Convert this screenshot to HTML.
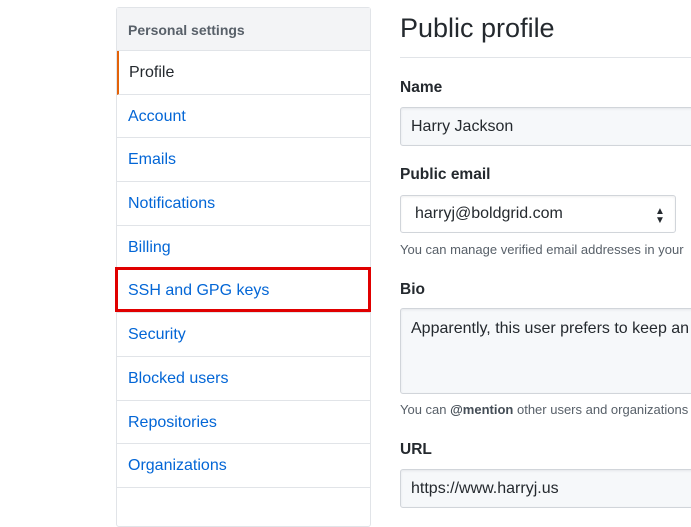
<!DOCTYPE html>
<html><head><meta charset="utf-8"><style>
*{box-sizing:border-box;margin:0;padding:0}
body{width:691px;height:500px;overflow:hidden;background:#fff;font-family:"Liberation Sans",sans-serif;position:relative}
.side{position:absolute;left:116px;top:7px;width:255px;height:520px;border:1px solid #e1e4e8;border-radius:3px;}
.hd{height:43px;background:#f3f4f6;border-bottom:1px solid #e1e4e8;padding:14px 11px;font-size:14px;font-weight:bold;color:#586069}
.it{height:43.7px;border-bottom:1px solid #e1e4e8;padding:0 11px;line-height:43px;font-size:16px;color:#0366d6}
.it.sel{color:#24292e;border-left:2px solid #e36209;padding-left:10px}
.red{position:absolute;left:115px;top:267px;width:256px;height:45px;border:3px solid #e00000}
.t{position:absolute;left:400px;font-size:27px;color:#24292e;top:13px}
.line{position:absolute;left:400px;right:0;top:57px;border-top:1px solid #e1e4e8}
.lb{position:absolute;left:400px;font-size:15.5px;font-weight:bold;color:#24292e}
.in{position:absolute;left:400px;border:1px solid #d1d5da;border-radius:3px;background:#f6f8fa;font-size:16px;color:#24292e;padding-left:10px;box-shadow:inset 0 1px 2px rgba(27,31,35,.075);white-space:nowrap;overflow:hidden}
.note{position:absolute;left:400px;font-size:13px;color:#586069;white-space:nowrap}
</style></head><body>
<div class="side">
<div class="hd">Personal settings</div>
<div class="it sel">Profile</div>
<div class="it">Account</div>
<div class="it">Emails</div>
<div class="it">Notifications</div>
<div class="it">Billing</div>
<div class="it">SSH and GPG keys</div>
<div class="it">Security</div>
<div class="it">Blocked users</div>
<div class="it">Repositories</div>
<div class="it">Organizations</div>
</div>
<div class="red"></div>
<div class="t">Public profile</div>
<div class="line"></div>
<div class="lb" style="top:79px">Name</div>
<div class="in" style="top:107px;width:300px;height:39px;line-height:37px">Harry Jackson</div>
<div class="lb" style="top:166px">Public email</div>
<div class="in" style="top:195px;width:276px;height:38px;line-height:36px;background:#fff;padding-left:14px">harryj@boldgrid.com</div>
<div style="position:absolute;left:654px;top:207px;font-size:10px;line-height:9px;color:#24292e;width:12px;text-align:center">&#9650;<br>&#9660;</div>
<div class="note" style="top:242px">You can manage verified email addresses in your</div>
<div class="lb" style="top:281px">Bio</div>
<div class="in" style="top:308px;width:300px;height:86px;padding-top:11px">Apparently, this user prefers to keep an air of mystery</div>
<div class="note" style="top:402px">You can <b style="color:#444d56">@mention</b> other users and organizations</div>
<div class="lb" style="top:441px">URL</div>
<div class="in" style="top:469px;width:300px;height:39px;line-height:37px">https://www.harryj.us</div>
</body></html>
